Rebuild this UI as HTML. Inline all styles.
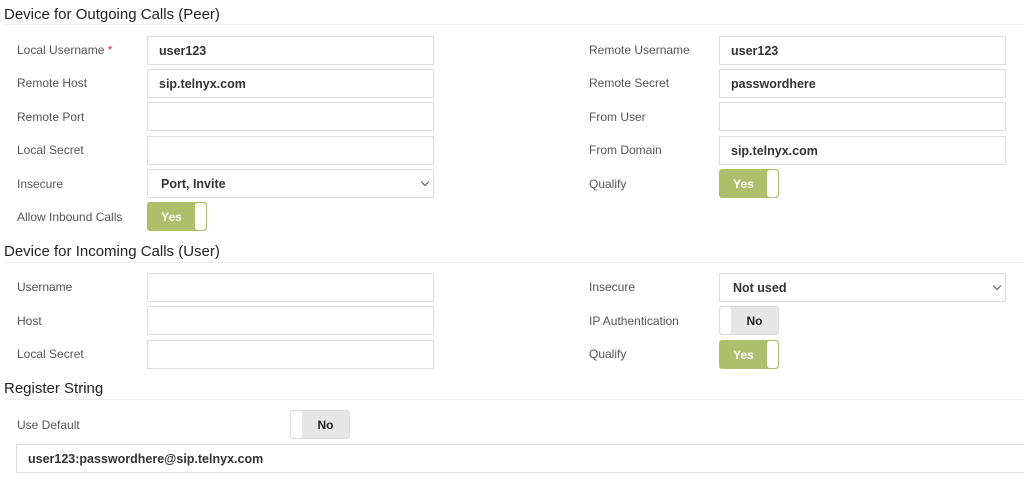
<!DOCTYPE html>
<html><head><meta charset="utf-8"><style>
*{box-sizing:border-box;margin:0;padding:0}
body{width:1024px;height:494px;background:#fff;font-family:"Liberation Sans",Arial,sans-serif;position:relative;overflow:hidden;color:#333}
.h{position:absolute;left:4px;font-size:15px;color:#222}
.ln{position:absolute;left:4px;right:0;height:1px;background:#eee}
.l{position:absolute;font-size:12px;color:#555}
.i{position:absolute;height:29px;border:1px solid #ddd;background:#fff;font-size:12.5px;font-weight:bold;color:#333;padding-left:11px;line-height:29px}
.sel::after{content:"";position:absolute;right:5px;top:9px;width:5px;height:5px;border-right:1.3px solid #555;border-bottom:1.3px solid #555;transform:rotate(45deg)}
.sel{padding-left:13px}
.t{position:absolute;width:60px;height:29px;border-radius:3px;font-size:12px;font-weight:bold;line-height:29px}
.y{background:#adbf6b;color:#fff;border:1px solid #adbf6b}
.y span{position:absolute;left:0;width:47px;text-align:center;top:0}
.y i{position:absolute;right:0;top:0;width:11px;height:27px;background:#fff;border-radius:3px}
.n{background:#e6e6e6;color:#222;border:1px solid #ddd}
.n span{position:absolute;left:11px;right:0;text-align:center;top:0}
.n i{position:absolute;left:0;top:0;width:11px;height:27px;background:#fff;border-radius:3px}
</style></head><body>
<div class="h" style="top:6px">Device for Outgoing Calls (Peer)</div>
<div class="ln" style="top:24px"></div>
<div class="l" style="left:17px;top:43px">Local Username <span style="color:#d33">*</span></div>
<div class="i" style="left:147px;top:36px;width:287px">user123</div>
<div class="l" style="left:17px;top:76px">Remote Host</div>
<div class="i" style="left:147px;top:69px;width:287px">sip.telnyx.com</div>
<div class="l" style="left:17px;top:110px">Remote Port</div>
<div class="i" style="left:147px;top:102px;width:287px"></div>
<div class="l" style="left:17px;top:143px">Local Secret</div>
<div class="i" style="left:147px;top:136px;width:287px"></div>
<div class="l" style="left:17px;top:177px">Insecure</div>
<div class="i sel" style="left:147px;top:169px;width:287px">Port, Invite</div>
<div class="l" style="left:17px;top:210px">Allow Inbound Calls</div>
<div class="t y" style="left:147px;top:202px"><span>Yes</span><i></i></div>

<div class="l" style="left:589px;top:43px">Remote Username</div>
<div class="i" style="left:719px;top:36px;width:287px">user123</div>
<div class="l" style="left:589px;top:76px">Remote Secret</div>
<div class="i" style="left:719px;top:69px;width:287px">passwordhere</div>
<div class="l" style="left:589px;top:110px">From User</div>
<div class="i" style="left:719px;top:102px;width:287px"></div>
<div class="l" style="left:589px;top:143px">From Domain</div>
<div class="i" style="left:719px;top:136px;width:287px">sip.telnyx.com</div>
<div class="l" style="left:589px;top:177px">Qualify</div>
<div class="t y" style="left:719px;top:169px"><span>Yes</span><i></i></div>

<div class="h" style="top:243px">Device for Incoming Calls (User)</div>
<div class="ln" style="top:262px"></div>
<div class="l" style="left:17px;top:280px">Username</div>
<div class="i" style="left:147px;top:273px;width:287px"></div>
<div class="l" style="left:17px;top:314px">Host</div>
<div class="i" style="left:147px;top:306px;width:287px"></div>
<div class="l" style="left:17px;top:347px">Local Secret</div>
<div class="i" style="left:147px;top:340px;width:287px"></div>
<div class="l" style="left:589px;top:280px">Insecure</div>
<div class="i sel" style="left:719px;top:273px;width:287px">Not used</div>
<div class="l" style="left:589px;top:314px">IP Authentication</div>
<div class="t n" style="left:719px;top:306px"><span>No</span><i></i></div>
<div class="l" style="left:589px;top:347px">Qualify</div>
<div class="t y" style="left:719px;top:340px"><span>Yes</span><i></i></div>

<div class="h" style="top:380px">Register String</div>
<div class="ln" style="top:399px"></div>
<div class="l" style="left:17px;top:418px">Use Default</div>
<div class="t n" style="left:290px;top:410px"><span>No</span><i></i></div>
<div class="i" style="left:16px;top:444px;width:1010px;height:29px;padding-left:11px">user123:passwordhere@sip.telnyx.com</div>
</body></html>
